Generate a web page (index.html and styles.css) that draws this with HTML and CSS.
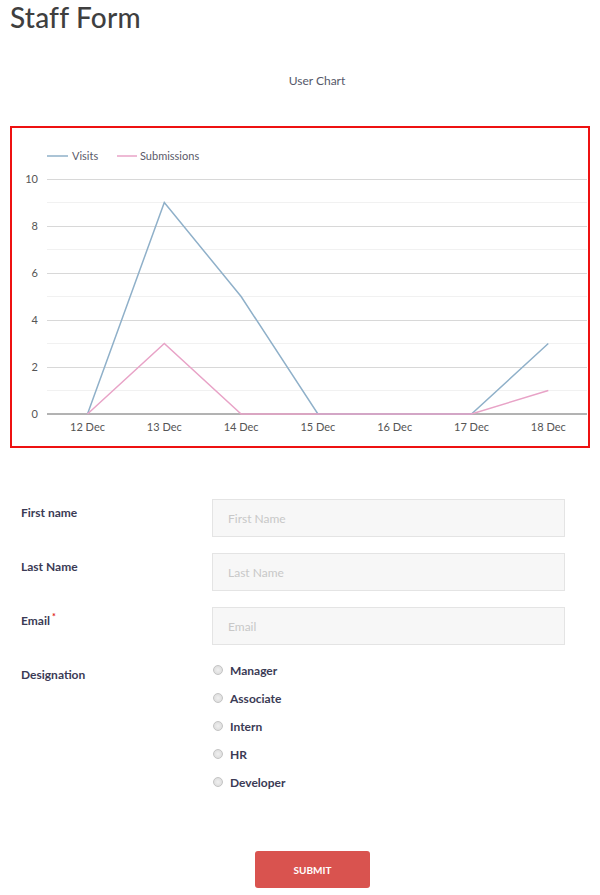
FILE: index.html
```html
<!DOCTYPE html>
<html lang="en">

<head>
    <meta charset="UTF-8">
    <meta name="viewport" content="width=device-width, initial-scale=1.0">
    <title>Staff Form</title>
    <link rel="stylesheet" href="styles.css">
</head>

<body>
    <div id="page">
        <h1 class="pageTitle">Staff Form</h1>
        <p class="chartTitle">User Chart</p>
        <div id="chartBox">
            <svg class="chart" width="576" height="318" viewBox="12 128 576 318">
                <!-- legend -->
                <line x1="47" y1="156" x2="68" y2="156" stroke="#8fb0c9" stroke-width="1.5" />
                <text x="72" y="160" class="legendText">Visits</text>
                <line x1="117" y1="156" x2="137" y2="156" stroke="#e8a3c7" stroke-width="1.5" />
                <text x="140" y="160" class="legendText">Submissions</text>

                <!-- grid -->
                <g stroke="#f1f1f1" stroke-width="1">
                    <line x1="47" y1="202.5" x2="587" y2="202.5" />
                    <line x1="47" y1="249.5" x2="587" y2="249.5" />
                    <line x1="47" y1="296.5" x2="587" y2="296.5" />
                    <line x1="47" y1="343.5" x2="587" y2="343.5" />
                    <line x1="47" y1="390.5" x2="587" y2="390.5" />
                </g>
                <g stroke="#d8d8d8" stroke-width="1">
                    <line x1="47" y1="179.5" x2="587" y2="179.5" />
                    <line x1="47" y1="226.5" x2="587" y2="226.5" />
                    <line x1="47" y1="273.5" x2="587" y2="273.5" />
                    <line x1="47" y1="320.5" x2="587" y2="320.5" />
                    <line x1="47" y1="367.5" x2="587" y2="367.5" />
                </g>
                <line x1="47" y1="414" x2="587" y2="414" stroke="#666" stroke-width="1" />

                <!-- y labels -->
                <g class="axisText" text-anchor="end">
                    <text x="38" y="183">10</text>
                    <text x="38" y="230">8</text>
                    <text x="38" y="277">6</text>
                    <text x="38" y="324">4</text>
                    <text x="38" y="371">2</text>
                    <text x="38" y="418">0</text>
                </g>

                <!-- x labels -->
                <g class="axisText" text-anchor="middle">
                    <text x="87.5" y="431">12 Dec</text>
                    <text x="164.3" y="431">13 Dec</text>
                    <text x="241.1" y="431">14 Dec</text>
                    <text x="317.9" y="431">15 Dec</text>
                    <text x="394.7" y="431">16 Dec</text>
                    <text x="471.5" y="431">17 Dec</text>
                    <text x="548.3" y="431">18 Dec</text>
                </g>

                <!-- series -->
                <polyline fill="none" stroke="#8fb0c9" stroke-width="1.5"
                    points="87.5,414 164.3,202.5 241.1,296.5 317.9,414 394.7,414 471.5,414 548.3,343.5" />
                <polyline fill="none" stroke="#e8a3c7" stroke-width="1.5"
                    points="87.5,414 164.3,343.5 241.1,414 317.9,414 394.7,414 471.5,414 548.3,390.5" />
            </svg>
        </div>

        <form class="staffForm" action="#" method="POST">
            <div class="row">
                <label class="fieldLabel" for="fname">First name</label>
                <input type="text" id="fname" name="fname" placeholder="First Name">
            </div>
            <div class="row">
                <label class="fieldLabel" for="lname">Last Name</label>
                <input type="text" id="lname" name="lname" placeholder="Last Name">
            </div>
            <div class="row">
                <label class="fieldLabel" for="email">Email<span class="req">*</span></label>
                <input type="email" id="email" name="email" placeholder="Email">
            </div>
            <div class="row">
                <span class="fieldLabel">Designation</span>
                <div class="options">
                    <label class="option"><input type="radio" name="designation" value="manager"> Manager</label>
                    <label class="option"><input type="radio" name="designation" value="associate"> Associate</label>
                    <label class="option"><input type="radio" name="designation" value="intern"> Intern</label>
                    <label class="option"><input type="radio" name="designation" value="hr"> HR</label>
                    <label class="option"><input type="radio" name="designation" value="developer"> Developer</label>
                </div>
            </div>
            <div class="actions">
                <button type="submit" class="submitBtn">SUBMIT</button>
            </div>
        </form>
    </div>
</body>

</html>
```

FILE: styles.css
```css
body {
    margin: 0;
    background: #fff;
    font-family: Lato, "Open Sans", sans-serif;
}

#page {
    width: 600px;
}

.pageTitle {
    margin: 0;
    padding: 0 10px;
    font-size: 28px;
    line-height: 34px;
    font-weight: 500;
    letter-spacing: 0.2px;
    color: #3f3f3f;
}

.chartTitle {
    margin: 34px 0 0 0;
    padding-left: 34px;
    text-align: center;
    font-size: 12px;
    line-height: 26px;
    color: #55586a;
}

#chartBox {
    margin: 32px 10px 0 10px;
    border: 2px solid #ee1111;
    height: 318px;
}

.chart {
    display: block;
}

.legendText,
.axisText text {
    font-family: Lato, sans-serif;
    font-size: 11px;
    fill: #555;
}

.legendText {
    fill: #5a5a6a;
}

.staffForm {
    margin-top: 51px;
    padding: 0 21px;
}

.row {
    display: grid;
    grid-template-columns: 191px 353px;
    margin-bottom: 16px;
}

.fieldLabel {
    padding-top: 6px;
    font-size: 12px;
    line-height: 16px;
    font-weight: bold;
    color: #3b3b55;
}

.req {
    color: #e02020;
    font-size: 9px;
    vertical-align: top;
    position: relative;
    top: -4px;
    margin-left: 2px;
}

.row input[type="text"],
.row input[type="email"] {
    box-sizing: border-box;
    width: 353px;
    height: 38px;
    margin: 0;
    padding: 0 15px;
    background: #f7f7f7;
    border: 1px solid #e4e4e4;
    border-radius: 0;
    font-family: Lato, sans-serif;
    font-size: 12px;
    color: #444;
}

.row input::placeholder {
    color: #c8c8c8;
}

.options {
    display: flex;
    flex-direction: column;
}

.option {
    display: flex;
    align-items: center;
    height: 28px;
    margin-top: -5px;
    margin-bottom: 5px;
    font-size: 12px;
    font-weight: bold;
    color: #3b3b55;
}

.option input {
    margin: 0 7px 0 1px;
    width: 10px;
    height: 10px;
    appearance: none;
    border: 1px solid #c4c4c4;
    border-radius: 50%;
    background: radial-gradient(circle, #f0f0f0 0%, #d8d8d8 100%);
}

.actions {
    display: flex;
    justify-content: center;
    margin-top: 50px;
}

.submitBtn {
    width: 115px;
    height: 37px;
    margin-left: 25px;
    background: #d9534f;
    border: none;
    border-radius: 3px;
    color: #fff;
    font-family: Lato, sans-serif;
    font-size: 10px;
    font-weight: bold;
}
```
